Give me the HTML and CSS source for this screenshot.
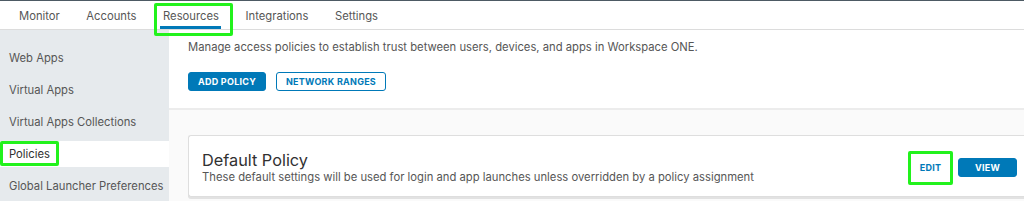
FILE: index.html
```html
<!DOCTYPE html>
<html>
<head>
<meta charset="utf-8">
<link rel="stylesheet" href="styles.css">
</head>
<body>
<div class="topline"></div>
<nav class="tabs">
  <a class="tab">Monitor</a>
  <a class="tab">Accounts</a>
  <a class="tab active highlight">Resources</a>
  <a class="tab">Integrations</a>
  <a class="tab">Settings</a>
</nav>
<div class="layout">
  <aside class="sidenav">
    <a class="nav-item">Web Apps</a>
    <a class="nav-item">Virtual Apps</a>
    <a class="nav-item">Virtual Apps Collections</a>
    <a class="nav-item selected"><span class="highlight nav-label">Policies</span></a>
    <a class="nav-item">Global Launcher Preferences</a>
  </aside>
  <main class="content">
    <section class="intro">
      <p class="desc">Manage access policies to establish trust between users, devices, and apps in Workspace ONE.</p>
      <div class="actions">
        <button class="btn btn-primary">ADD POLICY</button>
        <button class="btn btn-outline">NETWORK RANGES</button>
      </div>
    </section>
    <section class="list">
      <div class="card">
        <div class="card-text">
          <div class="card-title">Default Policy</div>
          <div class="card-sub">These default settings will be used for login and app launches unless overridden by a policy assignment</div>
        </div>
        <div class="card-actions">
          <button class="btn btn-link highlight">EDIT</button>
          <button class="btn btn-primary btn-view">VIEW</button>
        </div>
      </div>
    </section>
  </main>
</div>
</body>
</html>
```

FILE: styles.css
```css
* { box-sizing: border-box; }
html, body { margin: 0; padding: 0; }
body {
  width: 1024px;
  height: 201px;
  overflow: hidden;
  font-family: Inter, Lato, sans-serif;
  color: #565656;
  background: #fafafa;
}
.topline { height: 1px; background: #4d5a64; }
.tabs {
  display: flex;
  height: 29px;
  background: #fff;
  border-bottom: 1px solid #dcdcdc;
  padding-left: 19px;
}
.tab {
  position: relative;
  display: flex;
  align-items: center;
  font-size: 11.25px;
  white-space: nowrap;
  color: #565656;
  margin-right: 26.5px;
  height: 28px;
  padding-top: 1px;
}
.tab.active::before {
  content: "";
  position: absolute;
  left: -3px; right: -2px; bottom: 0;
  height: 3px;
  background: #0079b8;
}
.highlight { position: relative; }
.highlight::after {
  content: "";
  position: absolute;
  border: 3px solid #22f21c;
  border-radius: 2px;
  pointer-events: none;
}
.tab.highlight::after { left: -9px; right: -14px; top: 2px; bottom: -7px; }
.layout {
  display: grid;
  grid-template-columns: 169px 1fr;
  height: 171px;
}
.sidenav {
  background: #e6eaed;
  padding-top: 15px;
  display: flex;
  flex-direction: column;
  gap: 6px;
}
.nav-item {
  display: flex;
  align-items: center;
  height: 26px;
  padding-left: 9px;
  font-size: 11.25px;
  white-space: nowrap;
  color: #565656;
}
.nav-item.selected { background: #fff; color: #313131; }
.nav-label.highlight::after { left: -9px; right: -9px; top: -6px; bottom: -5px; }
.content { display: flex; flex-direction: column; }
.intro {
  background: #fff;
  padding: 9px 20px 0 19px;
  height: 80px;
  border-bottom: 2px solid #ececec;
}
.desc { margin: 0; font-size: 11.25px; line-height: 16px; color: #565656; white-space: nowrap; }
.actions { display: flex; gap: 10px; margin-top: 17px; }
.btn {
  font-family: Inter, Lato, sans-serif;
  font-size: 9px;
  font-weight: 700;
  letter-spacing: 0.25px;
  height: 19px;
  border-radius: 3px;
  padding: 0;
  white-space: nowrap;
  cursor: pointer;
}
.btn-primary { background: #0079b8; color: #fff; border: 1px solid #0079b8; width: 78px; }
.btn-outline { background: #fff; color: #0079b8; border: 1px solid #0079b8; width: 110px; }
.list { padding: 25px 0 0 19px; }
.card {
  background: #fff;
  border: 1px solid #dedede;
  border-right: none;
  border-radius: 3px 0 0 3px;
  box-shadow: 0 2px 0 #e2e2e2;
  height: 62px;
  display: flex;
  align-items: center;
  justify-content: space-between;
  padding: 0 7px 0 13px;
}
.card-title { font-size: 16.3px; color: #313131; line-height: 20px; margin-top: 3px; }
.card-sub { font-size: 11.25px; color: #565656; line-height: 15px; white-space: nowrap; }
.card-actions { display: flex; gap: 5px; align-items: center; margin-top: 2px; }
.btn-link { background: transparent; border: none; color: #0079b8; width: 45px; }
.btn-link.highlight::after { left: 0; right: 0; top: -7px; bottom: -8px; }
.btn-view { width: 59px; }
```
